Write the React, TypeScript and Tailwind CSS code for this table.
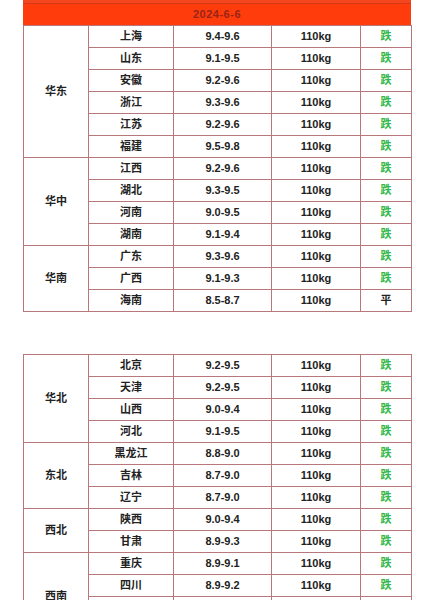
import React from "react";

type Row = { p: string; r: string; w: string; t: string };
type Group = { name: string; rows: Row[] };

const t1: Group[] = [
  {
    name: "华东",
    rows: [
      { p: "上海", r: "9.4-9.6", w: "110kg", t: "跌" },
      { p: "山东", r: "9.1-9.5", w: "110kg", t: "跌" },
      { p: "安徽", r: "9.2-9.6", w: "110kg", t: "跌" },
      { p: "浙江", r: "9.3-9.6", w: "110kg", t: "跌" },
      { p: "江苏", r: "9.2-9.6", w: "110kg", t: "跌" },
      { p: "福建", r: "9.5-9.8", w: "110kg", t: "跌" },
    ],
  },
  {
    name: "华中",
    rows: [
      { p: "江西", r: "9.2-9.6", w: "110kg", t: "跌" },
      { p: "湖北", r: "9.3-9.5", w: "110kg", t: "跌" },
      { p: "河南", r: "9.0-9.5", w: "110kg", t: "跌" },
      { p: "湖南", r: "9.1-9.4", w: "110kg", t: "跌" },
    ],
  },
  {
    name: "华南",
    rows: [
      { p: "广东", r: "9.3-9.6", w: "110kg", t: "跌" },
      { p: "广西", r: "9.1-9.3", w: "110kg", t: "跌" },
      { p: "海南", r: "8.5-8.7", w: "110kg", t: "平" },
    ],
  },
];

const t2: Group[] = [
  {
    name: "华北",
    rows: [
      { p: "北京", r: "9.2-9.5", w: "110kg", t: "跌" },
      { p: "天津", r: "9.2-9.5", w: "110kg", t: "跌" },
      { p: "山西", r: "9.0-9.4", w: "110kg", t: "跌" },
      { p: "河北", r: "9.1-9.5", w: "110kg", t: "跌" },
    ],
  },
  {
    name: "东北",
    rows: [
      { p: "黑龙江", r: "8.8-9.0", w: "110kg", t: "跌" },
      { p: "吉林", r: "8.7-9.0", w: "110kg", t: "跌" },
      { p: "辽宁", r: "8.7-9.0", w: "110kg", t: "跌" },
    ],
  },
  {
    name: "西北",
    rows: [
      { p: "陕西", r: "9.0-9.4", w: "110kg", t: "跌" },
      { p: "甘肃", r: "8.9-9.3", w: "110kg", t: "跌" },
    ],
  },
  {
    name: "西南",
    rows: [
      { p: "重庆", r: "8.9-9.1", w: "110kg", t: "跌" },
      { p: "四川", r: "8.9-9.2", w: "110kg", t: "跌" },
      { p: "贵州", r: "8.9-9.2", w: "110kg", t: "跌" },
      { p: "云南", r: "8.9-9.2", w: "110kg", t: "跌" },
    ],
  },
];

const cell = "border border-[#b8777a] text-center align-middle p-0";

function Table({ groups }: { groups: Group[] }) {
  return (
    <table className="w-[388px] table-fixed border-collapse">
      <colgroup>
        <col className="w-[65px]" />
        <col className="w-[85px]" />
        <col className="w-[98px]" />
        <col className="w-[89px]" />
        <col className="w-[51px]" />
      </colgroup>
      <tbody>
        {groups.map((g) =>
          g.rows.map((r, i) => (
            <tr key={g.name + r.p} className="h-[22px]">
              {i === 0 && (
                <td rowSpan={g.rows.length} className={cell}>
                  {g.name}
                </td>
              )}
              <td className={cell}>{r.p}</td>
              <td className={cell}>{r.r}</td>
              <td className={cell}>{r.w}</td>
              <td className={cell + (r.t === "跌" ? " text-[#35b84c]" : " text-[#222]")}>{r.t}</td>
            </tr>
          ))
        )}
      </tbody>
    </table>
  );
}

export default function App() {
  return (
    <div
      className="w-[434px] h-[600px] overflow-hidden bg-white px-[23px] text-[11px] font-bold leading-none text-[#222]"
      style={{ fontFamily: '"Liberation Sans", "Noto Sans CJK SC", sans-serif' }}
    >
      <div className="h-[4px] bg-[#f4461c] border-b border-[#d9381a]" />
      <div className="h-[21px] bg-[#ff3d0c] flex items-center justify-center text-[#9a2418] tracking-[0.5px]">
        2024-6-6
      </div>
      <Table groups={t1} />
      <div className="h-[42px]" />
      <Table groups={t2} />
    </div>
  );
}
